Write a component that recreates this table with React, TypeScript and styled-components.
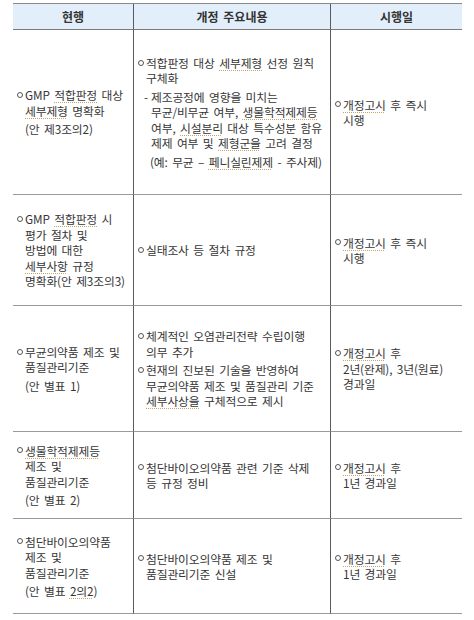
import React from "react";
import { styled, createGlobalStyle } from "styled-components";

const GlobalStyle = createGlobalStyle`
  html, body {
    margin: 0;
    padding: 0;
    background: #ffffff;
  }
  body {
    font-family: "Noto Sans CJK KR", "Noto Sans", sans-serif;
    color: #363636;
  }
`;

const Page = styled.div`
  width: 474px;
  height: 620px;
  padding: 3px 0 0 13px;
  box-sizing: border-box;
`;

const Table = styled.div`
  display: grid;
  grid-template-columns: 120px 197px 132px;
  grid-template-rows: 26px 165px 111px 126px 87px 95px;
  width: 449px;
  border-top: 1px solid #8a8a8a;
`;

const HeadCell = styled.div<{ $first?: boolean }>`
  display: flex;
  align-items: center;
  justify-content: center;
  background: #e2effa;
  border-bottom: 1px solid #7a7a7a;
  border-left: ${(p) => (p.$first ? "none" : "1px solid #5a5a5a")};
  font-size: 12px;
  font-weight: 700;
  color: #333;
  word-spacing: 2px;
`;

const Cell = styled.div<{ $first?: boolean }>`
  display: flex;
  flex-direction: column;
  justify-content: center;
  gap: 3px;
  padding-left: 3px;
  border-bottom: 1px solid #9a9a9a;
  border-left: ${(p) => (p.$first ? "none" : "1px solid #5a5a5a")};
  font-size: 11.8px;
  line-height: 15.5px;
  letter-spacing: -0.15px;
  word-spacing: 2px;
  white-space: nowrap;
`;

const Item = styled.div<{ $indent?: number }>`
  display: flex;
  margin-left: ${(p) => p.$indent ?? 0}px;
`;

const Marker = styled.span<{ $w?: number }>`
  flex: none;
  width: ${(p) => p.$w ?? 9}px;
  height: 15.5px;
  display: flex;
  align-items: center;
`;

const Ring = styled.span`
  width: 4px;
  height: 4px;
  border: 1px solid #555;
  border-radius: 50%;
  margin-left: 1px;
`;

const Body = styled.div``;

const Mark = styled.span`
  text-decoration: underline dotted #c9a468;
  text-decoration-thickness: 1px;
  text-underline-offset: 2px;
`;

const Note = styled.div<{ $indent?: number }>`
  margin-left: ${(p) => p.$indent ?? 9}px;
`;

const Bullet: React.FC<{ children: React.ReactNode; indent?: number }> = ({
  children,
  indent,
}) => (
  <Item $indent={indent}>
    <Marker>
      <Ring />
    </Marker>
    <Body>{children}</Body>
  </Item>
);

export default function App() {
  return (
    <Page>
      <GlobalStyle />
      <Table>
        <HeadCell $first>현행</HeadCell>
        <HeadCell>개정 주요내용</HeadCell>
        <HeadCell>시행일</HeadCell>

        {/* row 1 */}
        <Cell $first>
          <Bullet>
            GMP <Mark>적합판정</Mark> 대상
            <br />
            <Mark>세부제형</Mark> 명확화
          </Bullet>
          <Note>(안 제3조의2)</Note>
        </Cell>
        <Cell>
          <Bullet>
            적합판정 대상 <Mark>세부제형</Mark> 선정 원칙
            <br />
            구체화
          </Bullet>
          <Item $indent={7}>
            <Marker $w={7}>-</Marker>
            <Body>
              제조공정에 영향을 미치는
              <br />
              무균/비무균 여부, <Mark>생물학적제제등</Mark>
              <br />
              여부, <Mark>시설분리</Mark> 대상 특수성분 함유
              <br />
              제제 여부 및 <Mark>제형군을</Mark> 고려 결정
            </Body>
          </Item>
          <Note $indent={13}>
            (예: 무균 – <Mark>페니실린제제</Mark> - 주사제)
          </Note>
        </Cell>
        <Cell>
          <Bullet>
            <Mark>개정고시</Mark> 후 즉시
            <br />
            시행
          </Bullet>
        </Cell>

        {/* row 2 */}
        <Cell $first>
          <Bullet>
            GMP <Mark>적합판정</Mark> 시
            <br />
            평가 절차 및
            <br />
            방법에 대한
            <br />
            <Mark>세부사항</Mark> 규정
            <br />
            명확화(안 제3조의3)
          </Bullet>
        </Cell>
        <Cell>
          <Bullet>실태조사 등 절차 규정</Bullet>
        </Cell>
        <Cell>
          <Bullet>
            <Mark>개정고시</Mark> 후 즉시
            <br />
            시행
          </Bullet>
        </Cell>

        {/* row 3 */}
        <Cell $first>
          <Bullet>
            무균의약품 제조 및
            <br />
            품질관리기준
          </Bullet>
          <Note>(안 별표 1)</Note>
        </Cell>
        <Cell>
          <Bullet>
            체계적인 오염관리전략 수립이행
            <br />
            의무 추가
          </Bullet>
          <Bullet>
            현재의 진보된 기술을 반영하여
            <br />
            무균의약품 제조 및 품질관리 기준
            <br />
            <Mark>세부사상을</Mark> 구체적으로 제시
          </Bullet>
        </Cell>
        <Cell>
          <Bullet>
            <Mark>개정고시</Mark> 후
            <br />
            2년(완제), 3년(원료)
            <br />
            경과일
          </Bullet>
        </Cell>

        {/* row 4 */}
        <Cell $first>
          <Bullet>
            <Mark>생물학적제제등</Mark>
            <br />
            제조 및
            <br />
            품질관리기준
          </Bullet>
          <Note>(안 별표 2)</Note>
        </Cell>
        <Cell>
          <Bullet>
            첨단바이오의약품 관련 기준 삭제
            <br />
            등 규정 정비
          </Bullet>
        </Cell>
        <Cell>
          <Bullet>
            <Mark>개정고시</Mark> 후
            <br />
            1년 경과일
          </Bullet>
        </Cell>

        {/* row 5 */}
        <Cell $first>
          <Bullet>
            첨단바이오의약품
            <br />
            제조 및
            <br />
            품질관리기준
          </Bullet>
          <Note>
            (안 별표 <Mark>2의2</Mark>)
          </Note>
        </Cell>
        <Cell>
          <Bullet>
            첨단바이오의약품 제조 및
            <br />
            품질관리기준 신설
          </Bullet>
        </Cell>
        <Cell>
          <Bullet>
            <Mark>개정고시</Mark> 후
            <br />
            1년 경과일
          </Bullet>
        </Cell>
      </Table>
    </Page>
  );
}
